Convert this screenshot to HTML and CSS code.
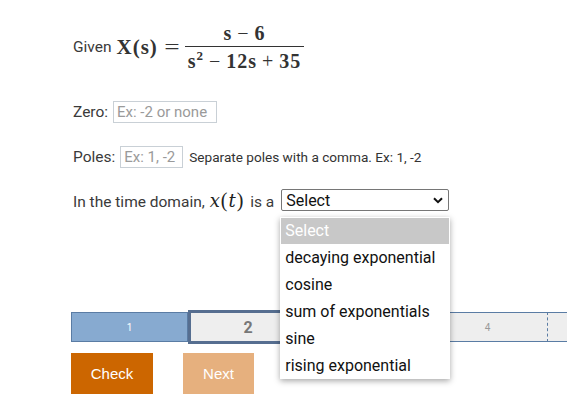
FILE: index.html
```html
<!DOCTYPE html>
<html>
<head>
<meta charset="utf-8">
<link rel="stylesheet" href="styles.css">
</head>
<body>
<div class="page">
  <div class="eq-row">
    <span class="lbl">Given</span>
    <span class="math bold big">X(s)</span>
    <span class="math eqsign">=</span>
    <span class="frac">
      <span class="num math bold">s<span class="op">−</span>6</span>
      <span class="den math bold">s<sup>2</sup><span class="op">−</span>12s<span class="op">+</span>35</span>
    </span>
  </div>

  <div class="row zero-row">
    <span class="lbl">Zero:</span>
    <span class="input zero-input">Ex: -2 or none</span>
  </div>

  <div class="row poles-row">
    <span class="lbl">Poles:</span>
    <span class="input poles-input">Ex: 1, -2</span>
    <span class="hint">Separate poles with a comma. Ex: 1, -2</span>
  </div>

  <div class="row domain-row">
    <span class="lbl">In the time domain, <span class="mathx"><span class="ital">x</span><span class="paren">(</span><span class="ital">t</span><span class="paren">)</span></span> is a</span>
    <div class="select-wrap">
      <div class="select">
        <span>Select</span>
        <svg class="chev" width="10" height="7" viewBox="0 0 10 7"><path d="M1 1.2 L5 5.2 L9 1.2" fill="none" stroke="#111" stroke-width="2"/></svg>
      </div>
      <ul class="menu">
        <li class="hl">Select</li>
        <li>decaying exponential</li>
        <li>cosine</li>
        <li>sum of exponentials</li>
        <li>sine</li>
        <li>rising exponential</li>
      </ul>
    </div>
  </div>

  <div class="progress">
    <div class="seg done">1</div>
    <div class="seg current">2</div>
    <div class="seg">3</div>
    <div class="seg dashed">4</div>
    <div class="seg"></div>
  </div>

  <div class="buttons">
    <button class="btn check">Check</button>
    <button class="btn next">Next</button>
  </div>
</div>
</body>
</html>
```

FILE: styles.css
```css
html, body {
  margin: 0;
  padding: 0;
  background: #fff;
  overflow: hidden;
}
body {
  font-family: Roboto, "Liberation Sans", sans-serif;
  color: #333;
  width: 567px;
  height: 412px;
}
.page {
  padding-left: 71px;
  padding-top: 19px;
}
.lbl {
  font-size: 15.5px;
  color: #3a3a3a;
  padding-left: 2px;
}
.math {
  font-family: "Liberation Serif", "DejaVu Serif", serif;
}
.bold { font-weight: bold; letter-spacing: 1px; }
.big { font-size: 21px; margin-left: 5px; }
.eqsign {
  display: inline-block;
  font-size: 21px;
  transform: scaleX(1.3);
  margin: 0 7px 0 8px;
}
.mathx { margin: 0 2px 0 1px; color: #222; }
.ital {
  font-family: "DejaVu Serif", "Liberation Serif", serif;
  font-style: italic;
  font-size: 18px;
}
.paren {
  font-family: "Liberation Serif", "DejaVu Serif", serif;
  font-size: 20px;
  margin: 0 1px;
}
.eq-row {
  display: flex;
  align-items: center;
  height: 56px;
}
.frac {
  display: inline-flex;
  flex-direction: column;
  align-items: center;
  font-size: 20px;
}
.op { margin: 0 5px; font-weight: normal; }
.num {
  padding: 0 4px 1px;
  line-height: 24px;
}
.den {
  border-top: 1.5px solid #333;
  padding: 1px 3px 0;
  line-height: 26px;
}
.den sup { font-size: 13px; line-height: 0; vertical-align: 8px; }
.row {
  display: flex;
  align-items: center;
  height: 22px;
}
.zero-row { margin-top: 26px; }
.poles-row { margin-top: 23px; }
.domain-row { margin-top: 21px; }
.input {
  box-sizing: border-box;
  height: 22px;
  border: 1px solid #c9d0d6;
  color: #9a9a9a;
  font-size: 15px;
  line-height: 20px;
  padding: 0 3px;
  margin-left: 5px;
}
.zero-input { width: 104px; }
.poles-input { width: 63px; }
.hint {
  font-size: 13.6px;
  margin-left: 6px;
  color: #333;
}
.select-wrap {
  position: relative;
  margin-left: 7px;
}
.select {
  box-sizing: border-box;
  width: 168px;
  height: 22px;
  border: 1px solid #767676;
  border-radius: 2px;
  display: flex;
  align-items: center;
  justify-content: space-between;
  padding: 0 5px 0 4px;
  font-size: 16px;
  color: #111;
}
.menu {
  position: absolute;
  left: -1px;
  top: 28px;
  width: 170px;
  margin: 0;
  padding: 0;
  list-style: none;
  background: #fff;
  box-shadow: 0 2px 6px rgba(0,0,0,0.35);
  font-size: 16px;
  color: #111;
  z-index: 5;
}
.menu li {
  height: 27px;
  line-height: 27px;
  padding-left: 5px;
}
.menu li.hl {
  background: #c8c8c8;
  color: #fff;
  margin: 1px 1px 0;
  height: 26px;
  line-height: 26px;
  padding-left: 4px;
}
.progress {
  display: flex;
  margin-top: 101px;
  height: 30px;
  width: 620px;
}
.seg {
  flex: 0 0 120px;
  box-sizing: border-box;
  background: #eeeeee;
  border-top: 1px solid #5a7ca4;
  border-bottom: 1px solid #5a7ca4;
  display: flex;
  align-items: center;
  justify-content: center;
  font-size: 10px;
  color: #999;
}
.seg.done {
  flex-basis: 117px;
  background: #87aad0;
  border: 1px solid #5a7ca4;
  color: #fff;
}
.seg.current {
  border: 3px solid #566e90;
  margin: -2px 0;
  height: 34px;
  font-size: 16px;
  font-weight: bold;
  color: #777;
}
.seg.dashed {
  border-right: 1px dashed #5a7ca4;
}
.buttons {
  display: flex;
  gap: 30px;
  margin-top: 11px;
}
.btn {
  border: none;
  height: 41px;
  font-family: "Liberation Sans", Arial, sans-serif;
  font-size: 15px;
  color: #fff;
  padding: 0;
}
.check { width: 82px; background: #cc6600; }
.next { width: 71px; background: #e6b07e; }
```
